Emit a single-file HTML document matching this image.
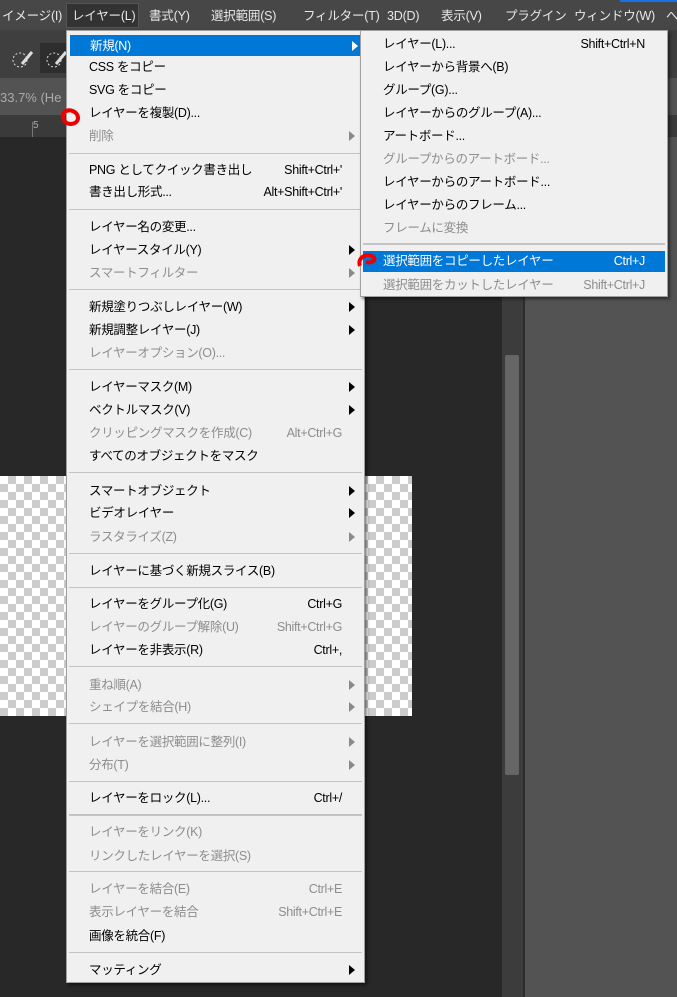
<!DOCTYPE html>
<html><head><meta charset="utf-8"><style>
*{margin:0;padding:0;box-sizing:border-box}
body{width:677px;height:997px;overflow:hidden;background:#282828;position:relative;font-family:"Liberation Sans","Noto Sans CJK JP",sans-serif;font-size:12.5px}
.abs{position:absolute}
.mb{left:0;top:0;width:677px;height:30px;background:#474747}
.mb span{position:absolute;top:7px;line-height:18px;height:18px;color:#e8e8e8;font-size:12.5px;white-space:nowrap;letter-spacing:-0.2px}
.tb{left:0;top:30px;width:677px;height:48px;background:#3f3f3f}
.tabs{left:0;top:78px;width:677px;height:37px;background:#535353}
.ruler{left:0;top:115px;width:677px;height:22px;background:#3a3a3a}
.menu{background:#f0f0f0;border:1px solid #a0a0a0;box-shadow:2px 2px 3px rgba(0,0,0,.5)}
.it{position:absolute;left:0;right:0;height:22px;line-height:22px;white-space:nowrap;color:#000;letter-spacing:-0.3px}
.it .t{position:absolute}
.it .s{position:absolute;text-align:right}
.d{color:#8d8d8d}
.sep{position:absolute;height:1px;background:#c4c4c4}
.ar{position:absolute;width:0;height:0;border-top:5px solid transparent;border-bottom:5px solid transparent;border-left:6px solid #000}
.ar.g{border-left-color:#8a8a8a}
.hl{background:#0078d7;color:#fff}
.chk{background-color:#fff;background-image:linear-gradient(45deg,#ccc 25%,transparent 25%,transparent 75%,#ccc 75%),linear-gradient(45deg,#ccc 25%,transparent 25%,transparent 75%,#ccc 75%);background-size:16px 16px;background-position:0 0,8px 8px}
</style></head><body>
<div class="abs mb">
<span style="left:2px">イメージ(I)</span>
<div class="abs" style="left:66px;top:3px;width:73px;height:25px;background:#333;border:1px solid #555"></div>
<span style="left:72px">レイヤー(L)</span>
<span style="left:149px">書式(Y)</span>
<span style="left:211px">選択範囲(S)</span>
<span style="left:303px">フィルター(T)</span>
<span style="left:387px">3D(D)</span>
<span style="left:441px">表示(V)</span>
<span style="left:505px">プラグイン</span>
<span style="left:574px">ウィンドウ(W)</span>
<span style="left:666px">へ</span>
</div>
<div class="abs" style="left:620px;top:0;width:57px;height:2px;background:#1473e6"></div>
<div class="abs tb"></div>
<div class="abs" style="left:40px;top:43px;width:26px;height:30px;background:#2e2e2e"></div>
<svg class="abs" style="left:8px;top:46px" width="60" height="28"><circle cx="12" cy="14" r="7" fill="none" stroke="#ddd" stroke-dasharray="2 2"/><path d="M14 18 L24 6" stroke="#ddd" stroke-width="3"/><circle cx="46" cy="14" r="7" fill="none" stroke="#ddd" stroke-dasharray="2 2"/><path d="M48 18 L58 6" stroke="#ddd" stroke-width="3"/></svg>
<div class="abs tabs"></div>
<div class="abs" style="left:0;top:90px;color:#aaa;font-size:13px">33.7% (He</div>
<div class="abs ruler"></div>
<div class="abs" style="left:33px;top:120px;color:#aaa;font-size:10px">5</div>
<div class="abs" style="left:32px;top:122px;width:1px;height:15px;background:#777"></div>
<div class="abs chk" style="left:0;top:476px;width:412px;height:240px"></div>
<div class="abs" style="left:502px;top:137px;width:22px;height:860px;background:#3c3c3c"></div>
<div class="abs" style="left:505px;top:355px;width:14px;height:420px;background:#666;border-radius:2px"></div>
<div class="abs" style="left:523px;top:30px;width:2px;height:967px;background:#2c2c2c"></div>
<div class="abs" style="left:525px;top:137px;width:152px;height:860px;background:#535353"></div>

<div class="abs menu" style="left:66px;top:30px;width:299px;height:953px">
<div class="it hl" style="top:4px;left:3px;right:3px;height:21px"><span class="t" style="left:20px">新規(N)</span><div class="ar" style="left:282px;top:6px;border-left-color:#fff"></div></div>
<div class="it" style="top:25px"><span class="t" style="left:22px">CSS をコピー</span></div>
<div class="it" style="top:48px"><span class="t" style="left:22px">SVG をコピー</span></div>
<div class="it" style="top:71px"><span class="t" style="left:22px">レイヤーを複製(D)...</span></div>
<div class="it d" style="top:94px"><span class="t" style="left:22px">削除</span><div class="ar g" style="left:282px;top:6px"></div></div>
<div class="sep" style="top:122px;left:2px;right:2px"></div>
<div class="it" style="top:128px"><span class="t" style="left:22px">PNG としてクイック書き出し</span><span class="s" style="right:22px">Shift+Ctrl+'</span></div>
<div class="it" style="top:150px"><span class="t" style="left:22px">書き出し形式...</span><span class="s" style="right:22px">Alt+Shift+Ctrl+'</span></div>
<div class="sep" style="top:178px;left:2px;right:2px"></div>
<div class="it" style="top:185px"><span class="t" style="left:22px">レイヤー名の変更...</span></div>
<div class="it" style="top:208px"><span class="t" style="left:22px">レイヤースタイル(Y)</span><div class="ar" style="left:282px;top:6px"></div></div>
<div class="it d" style="top:231px"><span class="t" style="left:22px">スマートフィルター</span><div class="ar g" style="left:282px;top:6px"></div></div>
<div class="sep" style="top:258px;left:2px;right:2px"></div>
<div class="it" style="top:265px"><span class="t" style="left:22px">新規塗りつぶしレイヤー(W)</span><div class="ar" style="left:282px;top:6px"></div></div>
<div class="it" style="top:288px"><span class="t" style="left:22px">新規調整レイヤー(J)</span><div class="ar" style="left:282px;top:6px"></div></div>
<div class="it d" style="top:311px"><span class="t" style="left:22px">レイヤーオプション(O)...</span></div>
<div class="sep" style="top:338px;left:2px;right:2px"></div>
<div class="it" style="top:345px"><span class="t" style="left:22px">レイヤーマスク(M)</span><div class="ar" style="left:282px;top:6px"></div></div>
<div class="it" style="top:368px"><span class="t" style="left:22px">ベクトルマスク(V)</span><div class="ar" style="left:282px;top:6px"></div></div>
<div class="it d" style="top:391px"><span class="t" style="left:22px">クリッピングマスクを作成(C)</span><span class="s" style="right:22px">Alt+Ctrl+G</span></div>
<div class="it" style="top:414px"><span class="t" style="left:22px">すべてのオブジェクトをマスク</span></div>
<div class="sep" style="top:441px;left:2px;right:2px"></div>
<div class="it" style="top:449px"><span class="t" style="left:22px">スマートオブジェクト</span><div class="ar" style="left:282px;top:6px"></div></div>
<div class="it" style="top:471px"><span class="t" style="left:22px">ビデオレイヤー</span><div class="ar" style="left:282px;top:6px"></div></div>
<div class="it d" style="top:495px"><span class="t" style="left:22px">ラスタライズ(Z)</span><div class="ar g" style="left:282px;top:6px"></div></div>
<div class="sep" style="top:522px;left:2px;right:2px"></div>
<div class="it" style="top:529px"><span class="t" style="left:22px">レイヤーに基づく新規スライス(B)</span></div>
<div class="sep" style="top:556px;left:2px;right:2px"></div>
<div class="it" style="top:562px"><span class="t" style="left:22px">レイヤーをグループ化(G)</span><span class="s" style="right:22px">Ctrl+G</span></div>
<div class="it d" style="top:585px"><span class="t" style="left:22px">レイヤーのグループ解除(U)</span><span class="s" style="right:22px">Shift+Ctrl+G</span></div>
<div class="it" style="top:608px"><span class="t" style="left:22px">レイヤーを非表示(R)</span><span class="s" style="right:22px">Ctrl+,</span></div>
<div class="sep" style="top:635px;left:2px;right:2px"></div>
<div class="it d" style="top:643px"><span class="t" style="left:22px">重ね順(A)</span><div class="ar g" style="left:282px;top:6px"></div></div>
<div class="it d" style="top:665px"><span class="t" style="left:22px">シェイプを結合(H)</span><div class="ar g" style="left:282px;top:6px"></div></div>
<div class="sep" style="top:692px;left:2px;right:2px"></div>
<div class="it d" style="top:700px"><span class="t" style="left:22px">レイヤーを選択範囲に整列(I)</span><div class="ar g" style="left:282px;top:6px"></div></div>
<div class="it d" style="top:723px"><span class="t" style="left:22px">分布(T)</span><div class="ar g" style="left:282px;top:6px"></div></div>
<div class="sep" style="top:750px;left:2px;right:2px"></div>
<div class="it" style="top:756px"><span class="t" style="left:22px">レイヤーをロック(L)...</span><span class="s" style="right:22px">Ctrl+/</span></div>
<div class="sep" style="top:783px;left:2px;right:2px;height:2px"></div>
<div class="it d" style="top:790px"><span class="t" style="left:22px">レイヤーをリンク(K)</span></div>
<div class="it d" style="top:814px"><span class="t" style="left:22px">リンクしたレイヤーを選択(S)</span></div>
<div class="sep" style="top:840px;left:2px;right:2px"></div>
<div class="it d" style="top:847px"><span class="t" style="left:22px">レイヤーを結合(E)</span><span class="s" style="right:22px">Ctrl+E</span></div>
<div class="it d" style="top:870px"><span class="t" style="left:22px">表示レイヤーを結合</span><span class="s" style="right:22px">Shift+Ctrl+E</span></div>
<div class="it" style="top:894px"><span class="t" style="left:22px">画像を統合(F)</span></div>
<div class="sep" style="top:921px;left:2px;right:2px"></div>
<div class="it" style="top:928px"><span class="t" style="left:22px">マッティング</span><div class="ar" style="left:282px;top:6px"></div></div>
</div>

<div class="abs menu" style="left:360px;top:30px;width:308px;height:267px">
<div class="it" style="top:2px"><span class="t" style="left:22px">レイヤー(L)...</span><span class="s" style="right:22px">Shift+Ctrl+N</span></div>
<div class="it" style="top:25px"><span class="t" style="left:22px">レイヤーから背景へ(B)</span></div>
<div class="it" style="top:48px"><span class="t" style="left:22px">グループ(G)...</span></div>
<div class="it" style="top:71px"><span class="t" style="left:22px">レイヤーからのグループ(A)...</span></div>
<div class="it" style="top:94px"><span class="t" style="left:22px">アートボード...</span></div>
<div class="it d" style="top:117px"><span class="t" style="left:22px">グループからのアートボード...</span></div>
<div class="it" style="top:140px"><span class="t" style="left:22px">レイヤーからのアートボード...</span></div>
<div class="it" style="top:163px"><span class="t" style="left:22px">レイヤーからのフレーム...</span></div>
<div class="it d" style="top:186px"><span class="t" style="left:22px">フレームに変換</span></div>
<div class="sep" style="top:212px;left:2px;right:2px;height:2px"></div>
<div class="it hl" style="top:220px;left:2px;right:2px;height:21px;line-height:21px"><span class="t" style="left:20px">選択範囲をコピーしたレイヤー</span><span class="s" style="right:20px">Ctrl+J</span></div>
<div class="it d" style="top:243px"><span class="t" style="left:22px">選択範囲をカットしたレイヤー</span><span class="s" style="right:22px">Shift+Ctrl+J</span></div>
</div>

<svg class="abs" style="left:56px;top:104px" width="30" height="26"><path d="M8 8 C14 4,22 8,22 14 C22 21,10 22,8 16 C6 12,7 9,9 8" fill="none" stroke="#e00" stroke-width="4"/></svg>
<svg class="abs" style="left:354px;top:248px" width="28" height="24"><path d="M6 18 C3 10,12 5,18 8 C24 11,18 16,12 14" fill="none" stroke="#e00" stroke-width="4"/></svg>
</body></html>
